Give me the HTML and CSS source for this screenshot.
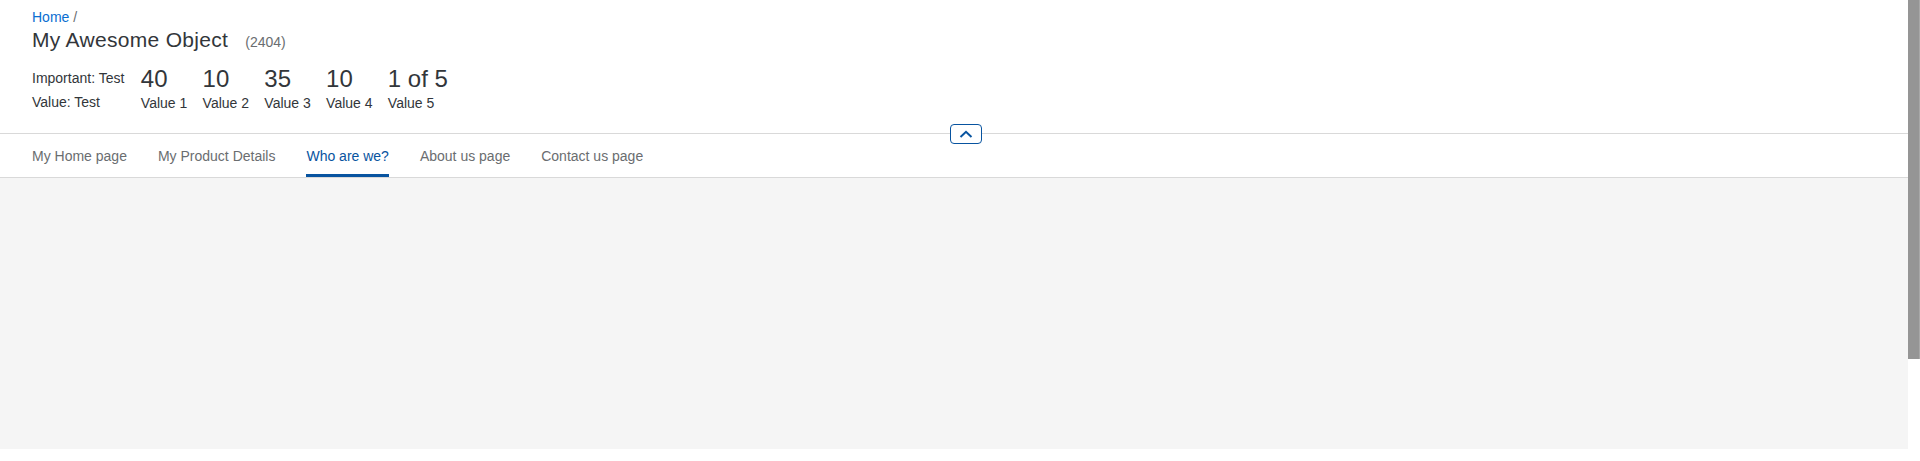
FILE: index.html
```
<!DOCTYPE html>
<html lang="en">
  <head>
    <meta charset="UTF-8">
    <meta name="viewport" content="width=device-width">
    <title>My Awesome Object</title>
    <link rel="stylesheet" href="styles.css">
  </head>
  <body>
    <div class="page">
      <header class="header">
        <nav class="breadcrumb">
          <a href="#">Home</a> <span class="sep">/</span>
        </nav>
        <h1 class="title">My Awesome Object <span class="subtitle">(2404)</span></h1>
        <div class="kpis">
          <div class="attrs">
            <div>Important: Test</div>
            <div>Value: Test</div>
          </div>
          <div class="kpi"><div class="num">40</div><div class="lbl">Value 1</div></div>
          <div class="kpi"><div class="num">10</div><div class="lbl">Value 2</div></div>
          <div class="kpi"><div class="num">35</div><div class="lbl">Value 3</div></div>
          <div class="kpi"><div class="num">10</div><div class="lbl">Value 4</div></div>
          <div class="kpi"><div class="num">1 of 5</div><div class="lbl">Value 5</div></div>
        </div>
        <button type="button" class="collapse" aria-label="Collapse header">
          <svg width="14" height="8" viewBox="0 0 14 8"><path d="M1.5 7 L7 1.8 L12.5 7" fill="none" stroke="#0854a0" stroke-width="2"/></svg>
        </button>
      </header>
      <ul class="tabs">
        <li>My Home page</li>
        <li>My Product Details</li>
        <li class="active">Who are we?</li>
        <li>About us page</li>
        <li>Contact us page</li>
      </ul>
      <main class="content"></main>
      <div class="hscroll"></div>
    </div>
    <div class="vscroll"><div class="thumb"></div></div>
  </body>
</html>
```

FILE: styles.css
```
html, body {
  height: 100%;
}
body {
  margin: 0;
  display: flex;
  overflow: hidden;
  font-family: "Liberation Sans", Arial, sans-serif;
  font-size: 14px;
  color: #32363a;
  background: #fff;
}
.page {
  flex: 1;
  display: flex;
  flex-direction: column;
  min-width: 0;
}
.header {
  position: relative;
  padding: 9px 32px 19px;
  border-bottom: 1px solid #d9d9d9;
  background: #fff;
}
.breadcrumb {
  line-height: 16px;
  height: 16px;
}
.breadcrumb a {
  color: #0a6ed1;
  text-decoration: none;
}
.sep {
  color: #6a6d70;
}
.title {
  margin: 3px 0 0;
  font-size: 21px;
  font-weight: normal;
  line-height: 24px;
  height: 24px;
  letter-spacing: .3px;
}
.subtitle {
  margin-left: 11px;
  font-size: 14px;
  line-height: 16px;
  letter-spacing: 0;
  color: #6a6d70;
}
.kpis {
  display: flex;
  margin-top: 13px;
}
.attrs {
  padding-top: 1px;
  line-height: 24px;
  margin-right: 16.5px;
}
.kpi {
  margin-right: 15.3px;
}
.num {
  font-size: 24px;
  line-height: 28px;
}
.lbl {
  line-height: 20px;
}
.collapse {
  position: absolute;
  left: 950px;
  bottom: -11px;
  width: 32px;
  height: 20px;
  padding: 0;
  border: 1px solid #0854a0;
  border-radius: 4px;
  background: #fff;
  display: flex;
  align-items: center;
  justify-content: center;
}
.tabs {
  display: flex;
  gap: 31px;
  margin: 0;
  padding: 0 32px;
  list-style: none;
  background: #fff;
  border-bottom: 1px solid #d9d9d9;
}
.tabs li {
  box-sizing: border-box;
  height: 43px;
  padding-top: 4px;
  display: flex;
  align-items: center;
  border-bottom: 3px solid transparent;
  color: #6a6d70;
  line-height: 16px;
}
.tabs li.active {
  color: #0854a0;
  border-bottom-color: #0854a0;
}
.content {
  flex: 1;
  background: #f5f5f5;
}
.hscroll {
  height: 12px;
  background: #fff;
}
.vscroll {
  width: 12px;
  background: #fff;
}
.thumb {
  height: 359px;
  background: #959595;
  border-right: 1px solid #a8a8a8;
  box-sizing: border-box;
}
```
